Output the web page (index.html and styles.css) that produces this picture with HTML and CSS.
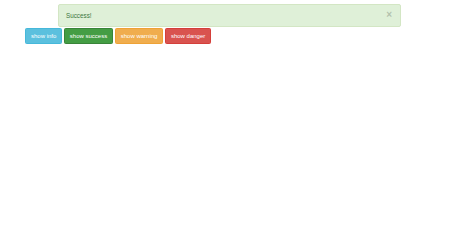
FILE: index.html
```html
<!DOCTYPE html>
<html>
<head>
<meta charset="utf-8">
<link rel="stylesheet" href="styles.css">
</head>
<body>
<div class="page">
  <div class="toolbar">
    <button class="btn btn-info">show info</button>
    <button class="btn btn-success">show success</button>
    <button class="btn btn-warning">show warning</button>
    <button class="btn btn-danger">show danger</button>
  </div>
</div>
<div class="alert">
  <span class="alert-text">Success!</span>
  <span class="close">×</span>
</div>
</body>
</html>
```
FILE: styles.css
```css
html, body {
  margin: 0;
  padding: 0;
  background: #fff;
  font-family: "Liberation Sans", Arial, Helvetica, sans-serif;
}
.page {
  padding: 28px 0 0 25px;
}
.toolbar {
  display: flex;
  gap: 1.5px;
}
.btn {
  font-family: "Liberation Sans", Arial, Helvetica, sans-serif;
  font-size: 6px;
  line-height: 9px;
  padding: 2.5px 5px;
  border: 0.5px solid transparent;
  border-radius: 1.5px;
  color: #fff;
  margin: 0;
  cursor: pointer;
}
.btn-info { background: #5bc0de; border-color: #46b8da; }
.btn-success { background: #449d44; border-color: #398439; }
.btn-warning { background: #f0ad4e; border-color: #eea236; }
.btn-danger { background: #d9534f; border-color: #d43f3a; }
.alert {
  position: absolute;
  left: 58px;
  top: 3.5px;
  width: 343px;
  height: 23px;
  box-sizing: border-box;
  background: #dff0d8;
  border: 1px solid #d3e6c4;
  border-radius: 2px;
  color: #3c763d;
  display: flex;
  align-items: center;
  justify-content: space-between;
  padding: 0 8px 0 7px;
  font-size: 6.3px;
}
.close {
  font-size: 10px;
  font-weight: bold;
  color: #000;
  opacity: 0.2;
  line-height: 1;
}
```
